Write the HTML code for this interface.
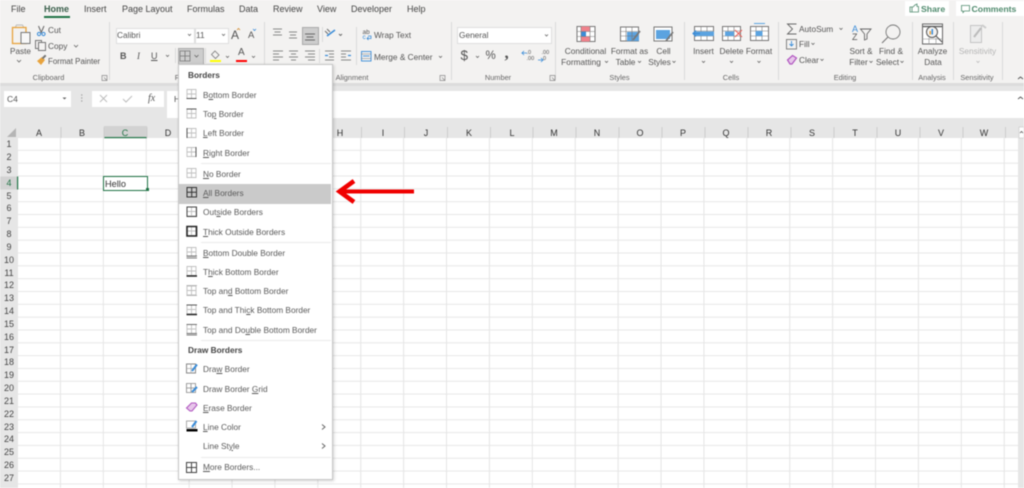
<!DOCTYPE html>
<html><head><meta charset="utf-8"><style>
html,body{margin:0;padding:0;background:#fff}
#p{position:relative;width:1024px;height:488px;overflow:hidden;background:#fff;font-family:"Liberation Sans",sans-serif;color:#444;filter:blur(.4px)}
.a{position:absolute}
.t{position:absolute;white-space:nowrap;font-size:8.3px;line-height:12px;color:#555}
.c{transform:translateX(-50%);text-align:center}
.m{font-size:8.3px;color:#595959;left:203px}
.h{font-size:9px;color:#333;top:126.5px;transform:translateX(-50%);line-height:12px}
.r{font-size:9px;color:#444;left:0;width:18px;text-align:center;line-height:13px}
.tab{font-size:9px;top:3px;color:#444}
.g{font-size:7.4px;color:#666;top:72px;transform:translateX(-50%)}
.v{position:absolute;width:1px;background:#dadada}
svg{position:absolute;overflow:visible}
</style></head><body><div id="p">

<!-- grid -->
<svg style="left:0;top:0" width="1024" height="488">
<defs><pattern id="gp" x="18" y="138" width="42.9" height="12.83" patternUnits="userSpaceOnUse">
<rect width="42.9" height="12.83" fill="#fff"/>
<rect x="42" width="1" height="12.83" fill="#e2e2e2"/><rect y="11.9" width="42.9" height="1" fill="#e6e6e6"/>
</pattern></defs>
<rect x="18" y="138" width="1000" height="350" fill="url(#gp)"/>
<rect x="1018" y="118" width="6" height="370" fill="#e6e6e6"/>
<rect x="0" y="118" width="1018" height="20" fill="#e6e6e6"/>
<rect x="0" y="138" width="18" height="350" fill="#e6e6e6"/>
<rect x="104" y="126" width="43" height="12" fill="#d2d2d2"/>
<rect x="104" y="137" width="43" height="1.2" fill="#217346"/>
<rect x="0" y="176.5" width="18" height="13" fill="#d2d2d2"/>
<rect x="17" y="176.5" width="1.2" height="13" fill="#217346"/>
<path d="M61 127V138M104 127V138M147 127V138M190 127V138M233 127V138M276 127V138M319 127V138M361.500 127V138M404.500 127V138M447.500 127V138M490.500 127V138M533 127V138M576 127V138M619 127V138M662 127V138M705 127V138M748 127V138M791 127V138M834 127V138M877 127V138M920 127V138M963 127V138M1005.500 127V138" stroke="#cdcdcd" stroke-width="1"/>
<path d="M16 128V137H7Z" fill="#b5b5b5"/>
<rect x="1019" y="127" width="5" height="11" fill="#fff" stroke="#bbb" stroke-width=".5"/>
<path d="M1020 133l1.500-1.500 1.500 1.500" stroke="#555" fill="none" stroke-width=".8"/>
</svg>

<!-- headers -->
<span class="t h" style="left:39px">A</span><span class="t h" style="left:82px">B</span><span class="t h" style="left:125px;color:#217346">C</span><span class="t h" style="left:168px">D</span>
<span class="t h" style="left:340px">H</span><span class="t h" style="left:383px">I</span><span class="t h" style="left:426px">J</span><span class="t h" style="left:469px">K</span><span class="t h" style="left:512px">L</span><span class="t h" style="left:554px">M</span><span class="t h" style="left:597px">N</span><span class="t h" style="left:640px">O</span><span class="t h" style="left:683px">P</span><span class="t h" style="left:726px">Q</span><span class="t h" style="left:769px">R</span><span class="t h" style="left:812px">S</span><span class="t h" style="left:855px">T</span><span class="t h" style="left:898px">U</span><span class="t h" style="left:941px">V</span><span class="t h" style="left:984px">W</span>

<span class="t r" style="top:138px">1</span><span class="t r" style="top:151px">2</span><span class="t r" style="top:163.500px">3</span><span class="t r" style="top:176.500px;color:#217346">4</span><span class="t r" style="top:189.500px">5</span><span class="t r" style="top:202px">6</span><span class="t r" style="top:215px">7</span><span class="t r" style="top:228px">8</span><span class="t r" style="top:240.500px">9</span><span class="t r" style="top:253.500px">10</span><span class="t r" style="top:266.500px">11</span><span class="t r" style="top:279px">12</span><span class="t r" style="top:292px">13</span><span class="t r" style="top:305px">14</span><span class="t r" style="top:317.500px">15</span><span class="t r" style="top:330.500px">16</span><span class="t r" style="top:343.500px">17</span><span class="t r" style="top:356px">18</span><span class="t r" style="top:369px">19</span><span class="t r" style="top:382px">20</span><span class="t r" style="top:394.500px">21</span><span class="t r" style="top:407.500px">22</span><span class="t r" style="top:420.500px">23</span><span class="t r" style="top:433px">24</span><span class="t r" style="top:446px">25</span><span class="t r" style="top:459px">26</span><span class="t r" style="top:471.500px">27</span>

<!-- selected cell -->
<div class="a" style="left:103px;top:176px;width:43px;height:13px;border:1px solid #217346;background:#fff"></div>
<div class="a" style="left:145.500px;top:188px;width:3px;height:3px;background:#217346"></div>
<span class="t" style="left:105px;top:177.500px;font-size:9.200px;color:#333">Hello</span>

<!-- ribbon -->
<div class="a" style="left:0;top:0;width:1024px;height:83px;background:#f3f2f1"></div>
<div class="a" style="left:0;top:83px;width:1024px;height:35px;background:#e6e6e6"></div>
<div class="a" style="left:0;top:83px;width:1024px;height:3px;background:#dcdcdc"></div>
<div class="a" style="left:4px;top:91px;width:67px;height:15.500px;background:#fff"></div>
<div class="a" style="left:92px;top:91px;width:72px;height:15.500px;background:#fff"></div>
<div class="a" style="left:167px;top:91px;width:857px;height:27px;background:#fff"></div>
<span class="t" style="left:7px;top:92.500px;font-size:8.500px">C4</span>
<svg style="left:0;top:85px" width="180" height="30" fill="none">
<path d="M62.500 12.500l2 2 2-2z" fill="#666"/>
<path d="M81 10h1.500M81 13h1.500M81 16h1.500" stroke="#aaa" stroke-width="1.200"/>
<path d="M100 10l7 7M107 10l-7 7" stroke="#bdbdbd"/>
<path d="M123 14l3 3 6-6" stroke="#bdbdbd"/>
</svg>
<span class="t" style="left:148px;top:92.500px;font-family:'Liberation Serif',serif;font-style:italic;font-size:10px;color:#555">fx</span>
<span class="t" style="left:174px;top:92.500px;font-size:8.500px">H</span>

<!-- tabs -->
<span class="t tab" style="left:11px">File</span>
<span class="t tab" style="left:44px;font-weight:bold;color:#3a5f4b">Home</span>
<div class="a" style="left:44px;top:16px;width:26px;height:1.500px;background:#217346"></div>
<span class="t tab" style="left:84px">Insert</span><span class="t tab" style="left:122px">Page Layout</span><span class="t tab" style="left:187px">Formulas</span><span class="t tab" style="left:239px">Data</span><span class="t tab" style="left:273px">Review</span><span class="t tab" style="left:317px">View</span><span class="t tab" style="left:351px">Developer</span><span class="t tab" style="left:407px">Help</span>

<div class="a" style="left:905px;top:1px;width:44px;height:15px;background:#fff"></div>
<div class="a" style="left:956px;top:1px;width:68px;height:15px;background:#fff"></div>
<span class="t" style="left:921px;top:3px;font-size:8.700px;font-weight:bold;color:#4f8a6d">Share</span>
<span class="t" style="left:971.500px;top:3px;font-size:8.700px;font-weight:bold;color:#4f8a6d">Comments</span>
<svg style="left:0;top:0" width="1024" height="20" fill="none" stroke="#4f8a6d" stroke-width=".8">
<path d="M910 7h3l2-2 2-1v2.500h1.500V12H910zM912 7v5"/>
<path d="M961.500 5.500h8v5.500h-5l-1.500 1.500V11h-1.500z"/>
</svg>

<!-- clipboard -->
<svg style="left:0;top:20px" width="110" height="50" fill="none">
<path d="M15 8l1.500-3h6l1.500 3" stroke="#bbb"/>
<rect x="12.500" y="7.500" width="13.500" height="16" stroke="#e8a33d" stroke-width="1.300"/>
<rect x="21" y="12.500" width="9" height="11" fill="#f7f7f7" stroke="#777" stroke-width="1"/>
<path d="M17 40l2 2 2-2" stroke="#666" stroke-width=".8"/>
<path d="M38.500 6l3 7M44 6l-3 7" stroke="#666"/><circle cx="39" cy="14" r="1.600" stroke="#3a8cd8"/><circle cx="43.500" cy="14" r="1.600" stroke="#3a8cd8"/>
<rect x="35.500" y="20.500" width="6" height="8" stroke="#777"/><rect x="38.500" y="22.500" width="7" height="8" fill="#f3f2f1" stroke="#777"/>
<path d="M74 25l2 2 2-2" stroke="#666" stroke-width=".8"/>
<path d="M37 41l5-4 3 3-4 5z" fill="#e8a33d"/><path d="M42 38l3-3 1 1-3 3" fill="#777" stroke="#777" stroke-width=".6"/>
</svg>
<span class="t" style="left:10px;top:45.500px;font-size:8.200px">Paste</span>
<span class="t" style="left:48px;top:24px">Cut</span>
<span class="t" style="left:48px;top:40px">Copy</span>
<span class="t" style="left:48px;top:56px;font-size:7.900px">Format Painter</span>
<span class="t g" style="left:48.500px">Clipboard</span>
<div class="v" style="left:109px;top:22px;height:58px"></div>

<!-- font -->
<div class="a" style="left:116px;top:28px;width:77px;height:14px;background:#fff;border:.5px solid #dedede"></div>
<div class="a" style="left:195px;top:28px;width:32px;height:14px;background:#fff;border:.5px solid #dedede"></div>
<span class="t" style="left:117px;top:29px">Calibri</span><span class="t" style="left:196px;top:29px">11</span>
<span class="t" style="left:231px;top:28.500px;font-size:12px;color:#555">A</span><span class="t" style="left:248px;top:29.500px;font-size:9.500px;color:#555">A</span>
<span class="t" style="left:120px;top:49.500px;font-size:9px;font-weight:bold;color:#555">B</span>
<span class="t" style="left:137px;top:49.500px;font-size:9px;font-style:italic;font-family:'Liberation Serif',serif;color:#555">I</span>
<span class="t" style="left:151px;top:49.500px;font-size:9px;text-decoration:underline;color:#555">U</span>
<div class="a" style="left:178px;top:48px;width:24px;height:16px;background:#cdcdcd;border:.5px solid #aaa"></div>
<span class="t" style="left:238px;top:47px;font-size:10px;color:#555">A</span>
<div class="a" style="left:210px;top:59.500px;width:11px;height:2.500px;background:#ffff00"></div>
<div class="a" style="left:236px;top:59.500px;width:11px;height:2.500px;background:#f00"></div>
<svg style="left:100px;top:20px" width="200" height="50" fill="none" stroke="#666" stroke-width=".8">
<path d="M88 14l1.500 1.500 1.500-1.500M122 14l1.500 1.500 1.500-1.500M66 35l1.500 1.500 1.500-1.500M126 36l1.500 1.500 1.500-1.500M152 36l1.500 1.500 1.500-1.500"/>
<path d="M137 10l1.500-1.500 1.500 1.500" stroke="#d08a2e"/><path d="M153 9l1.500 1.500 1.500-1.500" stroke="#3a8cd8"/>
<path d="M80 31h10v10H80zM85 31v10M80 36h10" stroke="#777"/><path d="M94.500 35l2 2 2-2"/>
<path d="M115 31l4 4-3.500 3.500-4-4z" stroke="#777"/>
</svg>
<div class="v" style="left:175px;top:48px;height:15px"></div>
<div class="v" style="left:205px;top:48px;height:15px"></div>
<span class="t g" style="left:177px">F</span>
<div class="v" style="left:264px;top:22px;height:58px"></div>

<!-- alignment -->
<div class="a" style="left:302px;top:27px;width:15px;height:16px;background:#cdcdcd;border:.5px solid #aaa"></div>
<svg style="left:260px;top:20px" width="200" height="50" fill="none" stroke="#666" stroke-width=".9">
<path d="M13 9h9M14.500 12h6M13 15h9" stroke-width=".8"/>
<path d="M29 12h8M30 15h6M29 18h8" stroke-width=".8"/>
<path d="M45 14h10M46.500 17h7M45 20h10" stroke-width="1"/>
<path d="M13 31h10M13 34h6M13 37h10M13 40h6M29 31h9M31 34h5M29 37h9M31 40h5M45 31h10M48 34h7M45 37h10M48 40h7" stroke-width=".8"/>
<path d="M65 31h9M69 34h5M69 37h5M65 40h9M81 31h10M81 34h5M81 37h5M81 40h10" stroke-width=".8"/>
<path d="M65 35.500h3M91 35.500h-3" stroke="#3a8cd8" stroke-width="1.300"/>
<path d="M67 16l8-6" stroke="#3a8cd8" stroke-width="1.500"/><path d="M67 9l3 3M65 11l3 3" stroke="#666"/>
<path d="M79 14l1.500 1.500 1.500-1.500"/>
<rect x="101.500" y="31.500" width="9.500" height="9.500" stroke="#3a8cd8"/><path d="M103 36h6.500" stroke="#3a8cd8"/><path d="M101 34h10M101 38.500h10" stroke="#777" stroke-width=".5"/>
<path d="M179 36l1.500 1.500 1.500-1.500" stroke-width=".8"/>
<path d="M364 36" />
</svg>
<span class="t" style="left:362.500px;top:29px;font-size:6.500px;color:#555;line-height:7px">ab</span>
<span class="t" style="left:362.500px;top:34px;font-size:6.500px;color:#3a8cd8;line-height:7px">c</span>
<svg style="left:360px;top:30px" width="15" height="12" fill="none" stroke="#3a8cd8" stroke-width=".8"><path d="M8 6h3v2.500H7M8.500 7l-1.500 1.500 1.500 1.500"/></svg>
<span class="t" style="left:374px;top:29px">Wrap Text</span>
<span class="t" style="left:374px;top:50.500px">Merge &amp; Center</span>
<span class="t g" style="left:352px">Alignment</span>
<div class="v" style="left:322px;top:27px;height:15px"></div>
<div class="v" style="left:319px;top:49px;height:14px"></div>
<div class="v" style="left:356px;top:27px;height:38px"></div>
<div class="v" style="left:451px;top:22px;height:58px"></div>

<!-- number -->
<div class="a" style="left:457px;top:27px;width:93px;height:15px;background:#fff;border:.5px solid #dedede"></div>
<span class="t" style="left:459px;top:29px">General</span>
<span class="t" style="left:460.500px;top:50px;font-size:13.500px;color:#555">$</span>
<span class="t" style="left:485.500px;top:50px;font-size:11.500px;color:#555">%</span>
<span class="t" style="left:504.500px;top:47px;font-size:17px;font-weight:bold;color:#555;font-family:'Liberation Serif',serif">,</span>
<span class="t" style="left:526.500px;top:50px;font-size:5.500px;line-height:6px;color:#555">.0<br>.00</span>
<span class="t" style="left:541.500px;top:50px;font-size:5.500px;line-height:6px;color:#555">.00<br>.0</span>
<span class="t g" style="left:498px">Number</span>
<svg style="left:440px;top:20px" width="130" height="50" fill="none" stroke="#666" stroke-width=".8">
<path d="M105 14.500l1.500 1.500 1.500-1.500M36 36l1.500 1.500 1.500-1.500"/>
<path d="M87 33h-5l2-2M82 33l2 2M98 40h5l-2-2M103 40l-2 2" stroke="#3a8cd8"/>
</svg>
<div class="v" style="left:555px;top:22px;height:58px"></div>

<!-- styles -->
<svg style="left:560px;top:20px" width="240" height="50" fill="none">
<rect x="17" y="6.500" width="18" height="15" fill="#fff" stroke="#777"/><rect x="21" y="6.500" width="9" height="5" fill="#f0828c"/><rect x="21" y="11.500" width="5" height="5" fill="#3a8cd8"/><rect x="21" y="16.500" width="9" height="5" fill="#f0828c"/><path d="M21 6v16M30 6v16M17 11.500h18M17 16.500h18" stroke="#777" stroke-width=".6"/>
<rect x="60.500" y="7" width="18" height="14" fill="#fff" stroke="#777"/><rect x="67" y="12" width="12" height="9" fill="#5ba3e0"/><path d="M66 7v14M72 7v14M60 11.500h18M60 16h18" stroke="#777" stroke-width=".6"/><path d="M80 11l-7 9" stroke="#777" stroke-width="1.800"/>
<rect x="94" y="7" width="18" height="14" fill="#fff" stroke="#777"/><rect x="96" y="10" width="14" height="9" fill="#5ba3e0"/><path d="M113 12l-7 9" stroke="#777" stroke-width="1.800"/>
</svg>
<span class="t c" style="left:585.500px;top:45px">Conditional</span><span class="t c" style="left:581px;top:56px">Formatting</span>
<span class="t c" style="left:629.500px;top:45px">Format as</span><span class="t c" style="left:625.500px;top:56px">Table</span>
<span class="t c" style="left:663.500px;top:45px">Cell</span><span class="t c" style="left:659.500px;top:56px">Styles</span>
<svg style="left:600px;top:55px" width="80" height="20" fill="none" stroke="#666" stroke-width=".8"><path d="M5 6l1.500 1.500L8 6M38 6l1.500 1.500L41 6M72.500 6l1.500 1.500L75.500 6"/></svg>
<span class="t g" style="left:619.500px">Styles</span>
<div class="v" style="left:684px;top:22px;height:58px"></div>

<!-- cells -->
<svg style="left:690px;top:20px" width="90" height="50" fill="none">
<rect x="4.500" y="6.500" width="19" height="14" fill="#fff" stroke="#777"/><path d="M11 6v15M17 6v15M4 11h19M4 16h19" stroke="#777" stroke-width=".6"/><rect x="5" y="11.500" width="19" height="4.500" fill="#5ba3e0"/><path d="M3 13.500h7M6 10.500l-3 3 3 3" stroke="#3a8cd8" stroke-width="1.200"/>
<rect x="32.500" y="6.500" width="18" height="14" fill="#fff" stroke="#777"/><path d="M38 6v15M44 6v15M32 11h18M32 16h18" stroke="#777" stroke-width=".6"/><rect x="35" y="11.500" width="9" height="4.500" fill="#5ba3e0"/><path d="M45 10l7 7M52 10l-7 7" stroke="#e8615a" stroke-width="1"/>
<rect x="60.500" y="6.500" width="18" height="14" fill="#fff" stroke="#777"/><path d="M66 6v15M72 6v15M60 11h18M60 16h18" stroke="#777" stroke-width=".6"/><rect x="65.500" y="11" width="7" height="5" fill="#5ba3e0"/><path d="M64 3.500h11" stroke="#5ba3e0"/>
</svg>
<span class="t c" style="left:703.500px;top:45px">Insert</span><span class="t c" style="left:731.500px;top:45px">Delete</span><span class="t c" style="left:759px;top:45px">Format</span>
<svg style="left:695px;top:55px" width="80" height="20" fill="none" stroke="#666" stroke-width=".8"><path d="M7 6l1.500 1.500L10 6M35 6l1.500 1.500L38 6M62.500 6l1.500 1.500L65.500 6"/></svg>
<span class="t g" style="left:731px">Cells</span>
<div class="v" style="left:778px;top:22px;height:58px"></div>

<!-- editing -->
<svg style="left:780px;top:20px" width="150" height="50" fill="none" stroke-width=".9">
<path d="M16.500 4h-9l5 5-5 5h9" stroke="#666"/>
<rect x="6.500" y="19.500" width="10" height="9.500" stroke="#777"/><path d="M11.500 21v5M9.500 24l2 2 2-2" stroke="#3a8cd8"/>
<path d="M7.500 40l5-4.500 4 2.500-4.500 6H10z" fill="#e7c6ea" stroke="#b057c0" stroke-width="1.200"/>
<path d="M80.500 9h10.500l-4 5v5l-2.500 1v-6z" stroke="#666"/>
<circle cx="113" cy="12" r="7" stroke="#777"/><path d="M108 17l-6 6" stroke="#777" stroke-width="1.100"/>
</svg>
<span class="t" style="left:799px;top:23px">AutoSum</span><span class="t" style="left:799px;top:38px">Fill</span><span class="t" style="left:799px;top:54px">Clear</span>
<span class="t" style="left:852px;top:25px;font-size:9px;line-height:8px;color:#3a8cd8">A</span><span class="t" style="left:852px;top:33px;font-size:9px;line-height:8px;color:#555">Z</span>
<span class="t c" style="left:861px;top:45px">Sort &amp;</span><span class="t c" style="left:858.500px;top:56px">Filter</span><span class="t c" style="left:891px;top:45px">Find &amp;</span><span class="t c" style="left:887.500px;top:56px">Select</span>
<svg style="left:830px;top:20px" width="110" height="50" fill="none" stroke="#666" stroke-width=".8"><path d="M9.500 8l1.500 1.500L12.500 8M-18.500 23l1.500 1.500L-15.500 23M-9.500 39l1.500 1.500L-6.500 39M39.500 41l1.500 1.500L42.500 41M70.500 41l1.500 1.500L73.500 41"/></svg>
<span class="t g" style="left:845px">Editing</span>
<div class="v" style="left:912px;top:22px;height:58px"></div>

<!-- analysis -->
<svg style="left:915px;top:20px" width="50" height="30" fill="none">
<rect x="7.500" y="4" width="20" height="20" fill="#fff" stroke="#666"/><path d="M7 6.500h21" stroke="#666" stroke-width="1.500"/><path d="M7 19h21M14 18v6M21 18v6" stroke="#888" stroke-width=".6"/>
<circle cx="17" cy="12" r="5.500" fill="#f3f2f1" stroke="#555"/><rect x="14.500" y="11" width="1.500" height="3.500" fill="#e8a33d"/><rect x="16.500" y="9" width="1.500" height="5.500" fill="#3a8cd8"/><path d="M21 16l6 6" stroke="#555" stroke-width="1.100"/>
</svg>
<span class="t c" style="left:932.500px;top:45px">Analyze</span><span class="t c" style="left:933px;top:56px">Data</span>
<span class="t g" style="left:932px">Analysis</span>
<div class="v" style="left:953px;top:22px;height:58px"></div>

<!-- sensitivity -->
<svg style="left:960px;top:20px" width="40" height="30" fill="none"><rect x="10.500" y="5.500" width="11" height="17" fill="#ececec" stroke="#c4c4c4"/><path d="M14 17l7-9" stroke="#bbb" stroke-width="2"/><path d="M22 5l4 3" stroke="#ccc" stroke-width="2"/></svg>
<span class="t c" style="left:977.500px;top:45px;color:#b5b5b5">Sensitivity</span>
<svg style="left:970px;top:55px" width="20" height="20" fill="none" stroke="#bbb" stroke-width=".8"><path d="M6.500 6l1.500 1.500L9.500 6"/></svg>
<span class="t g" style="left:977px">Sensitivity</span>
<div class="v" style="left:1002px;top:22px;height:58px"></div>
<svg style="left:1010px;top:70px" width="14" height="40" fill="none" stroke="#555" stroke-width=".9"><path d="M8 9l2.500-2 2.500 2M8 29l2.500-2 2.500 2"/></svg>

<!-- dialog launchers -->
<svg style="left:0;top:70px" width="700" height="12" fill="none" stroke="#888" stroke-width=".7"><path d="M102 5.500h5v5h-5zM104 7.500l3 3M440 5.500h5v5h-5zM442 7.500l3 3M550 5.500h5v5h-5zM552 7.500l3 3"/></svg>

<!-- dropdown -->
<div class="a" style="left:178px;top:64px;width:153px;height:414px;background:#fff;border:1px solid #c6c6c6;box-shadow:1px 1px 3px rgba(0,0,0,.18)"></div>
<div class="a" style="left:179px;top:183.500px;width:152px;height:20px;background:#cacaca"></div>
<div class="a" style="left:201px;top:163px;width:130px;height:1px;background:#eaeaea"></div>
<div class="a" style="left:201px;top:242px;width:130px;height:1px;background:#eaeaea"></div>
<div class="a" style="left:201px;top:457px;width:130px;height:1px;background:#eaeaea"></div>
<div class="a" style="left:201px;top:340px;width:130px;height:1px;background:#eaeaea"></div>
<span class="t" style="left:188px;top:69px;font-size:8.300px;font-weight:bold;color:#444">Borders</span>
<span class="t m" style="top:88.500px">B<u>o</u>ttom Border</span>
<span class="t m" style="top:108px">To<u>p</u> Border</span>
<span class="t m" style="top:127px"><u>L</u>eft Border</span>
<span class="t m" style="top:146.500px"><u>R</u>ight Border</span>
<span class="t m" style="top:167.500px"><u>N</u>o Border</span>
<span class="t m" style="top:186.500px"><u>A</u>ll Borders</span>
<span class="t m" style="top:206px">Out<u>s</u>ide Borders</span>
<span class="t m" style="top:225.500px"><u>T</u>hick Outside Borders</span>
<span class="t m" style="top:246.500px"><u>B</u>ottom Double Border</span>
<span class="t m" style="top:265.500px">T<u>h</u>ick Bottom Border</span>
<span class="t m" style="top:285px">Top an<u>d</u> Bottom Border</span>
<span class="t m" style="top:304px">Top and Thi<u>c</u>k Bottom Border</span>
<span class="t m" style="top:323.500px">Top and Do<u>u</u>ble Bottom Border</span>
<span class="t" style="left:188px;top:344px;font-size:8.300px;font-weight:bold;color:#444">Draw Borders</span>
<span class="t m" style="top:363px">Dra<u>w</u> Border</span>
<span class="t m" style="top:382.500px">Draw Border <u>G</u>rid</span>
<span class="t m" style="top:401.500px"><u>E</u>rase Border</span>
<span class="t m" style="top:421px"><u>L</u>ine Color</span>
<span class="t m" style="top:440px">Line St<u>y</u>le</span>
<span class="t m" style="top:461px"><u>M</u>ore Borders...</span>

<!-- menu icons -->
<svg style="left:0;top:0" width="340" height="488" fill="none">
<defs><g id="b"><path d="M.500.500h9v9h-9zM5 .500v9M.500 5h9" stroke="#c0c0c0" stroke-width=".9"/></g></defs>
<use href="#b" x="186.500" y="89"/><path d="M186.500 98.500h10" stroke="#555"/>
<use href="#b" x="186.500" y="108.500"/><path d="M186.500 109h10" stroke="#555"/>
<use href="#b" x="186.500" y="128"/><path d="M187 128v10" stroke="#555"/>
<use href="#b" x="186.500" y="147"/><path d="M196 147v10" stroke="#555"/>
<use href="#b" x="186.500" y="168"/>
<path d="M187 187.500h9.500v9.500H187zM191.700 187.500v9.500M187 192.200h9.500" stroke="#333" stroke-width="1"/>
<use href="#b" x="186.500" y="206.500"/><path d="M187 207h9.500v9.500H187z" stroke="#444"/>
<use href="#b" x="186.500" y="226"/><path d="M187 226.500h9.500v9.500H187z" stroke="#222" stroke-width="1.600"/>
<use href="#b" x="186.500" y="247"/><path d="M186.500 256h10.500M186.500 258h10.500" stroke="#555" stroke-width=".8"/>
<use href="#b" x="186.500" y="266"/><path d="M186.500 276h10.500" stroke="#222" stroke-width="1.500"/>
<use href="#b" x="186.500" y="285.500"/><path d="M186.500 285.500h10.500M186.500 295.500h10.500" stroke="#aaa" stroke-width=".8"/>
<use href="#b" x="186.500" y="304.500"/><path d="M186.500 305h10.500" stroke="#555"/><path d="M186.500 314.500h10.500" stroke="#222" stroke-width="1.500"/>
<use href="#b" x="186.500" y="324"/><path d="M186.500 324.500h10.500M186.500 333.500h10.500M186.500 335h10.500" stroke="#555" stroke-width=".8"/>
<rect x="186.500" y="364" width="9" height="9" stroke="#888"/><path d="M191 364v9M186.500 368.500h9" stroke="#aaa" stroke-width=".7"/><path d="M192 371l5-6.500" stroke="#3a8cd8" stroke-width="2"/>
<path d="M186.500 383.500h9v9h-9zM191 383.500v9M186.500 388h9" stroke="#888" stroke-width=".8"/><path d="M192 392l5-5" stroke="#3a8cd8" stroke-width="2"/>
<path d="M186.500 408l5-5 4 0 1.500 2-5 6h-2z" fill="#e7c6ea" stroke="#b057c0" stroke-width="1.100"/>
<rect x="186.500" y="421" width="9" height="7" stroke="#888" stroke-width=".7"/><path d="M192 427l4.500-6" stroke="#3a8cd8" stroke-width="2"/><rect x="186.500" y="429" width="11" height="2.500" fill="#000"/>
<path d="M186.500 462.500h10v10h-10zM191.500 462.500v10M186.500 467.500h10" stroke="#444"/>
<path d="M322 424.500l3 2.500-3 2.500M322 443.500l3 2.500-3 2.500" stroke="#666"/>
</svg>

<!-- arrow -->
<svg style="left:330px;top:170px" width="90" height="40" fill="none">
<path d="M84 21.500H12" stroke="#f00000" stroke-width="4"/>
<path d="M24 11L9.500 21.500 24 32" stroke="#f00000" stroke-width="4.500" stroke-linejoin="miter"/>
</svg>

</div></body></html>
